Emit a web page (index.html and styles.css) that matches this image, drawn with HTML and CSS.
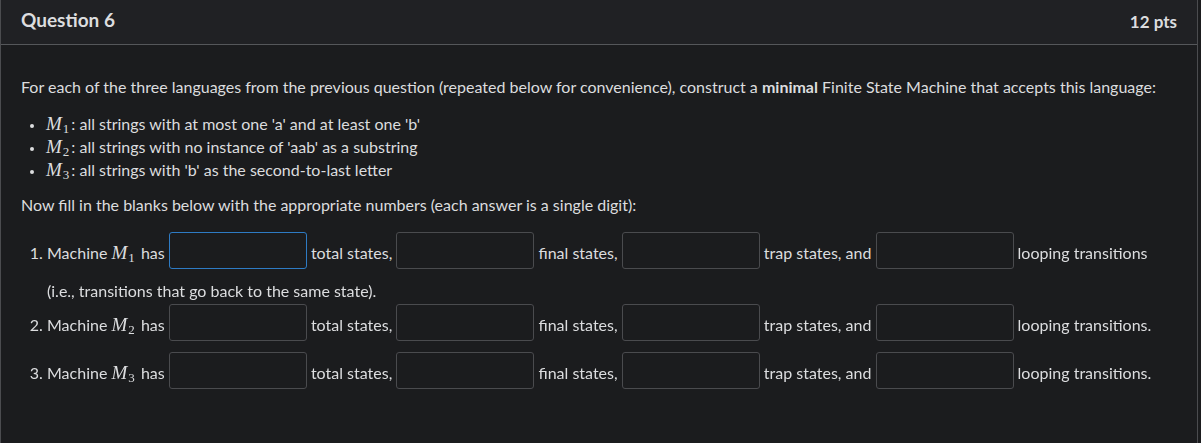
FILE: index.html
```html
<!DOCTYPE html>
<html>
<head>
<meta charset="utf-8">
<link rel="stylesheet" href="styles.css">
</head>
<body>
<div class="question">
  <div class="q-header">
    <span class="q-title">Question 6</span>
    <span class="q-pts">12 pts</span>
  </div>
  <div class="q-body">
    <p class="intro">For each of the three languages from the previous question (repeated below for convenience), construct a <strong>minimal</strong> Finite State Machine that accepts this language:</p>
    <ul class="langs">
      <li><span class="m">M<sub>1</sub></span>: all strings with at most one 'a' and at least one 'b'</li>
      <li><span class="m">M<sub>2</sub></span>: all strings with no instance of 'aab' as a substring</li>
      <li><span class="m">M<sub>3</sub></span>: all strings with 'b' as the second-to-last letter</li>
    </ul>
    <p class="now">Now fill in the blanks below with the appropriate numbers (each answer is a single digit):</p>
    <ol class="blanks">
      <li>Machine <span class="m mm">M<sub>1</sub></span> has <input class="blank focus" type="text" value="" autofocus> total states, <input class="blank" type="text"> final states, <input class="blank" type="text"> trap states, and <input class="blank" type="text"> looping transitions (i.e., transitions that go back to the same state).</li>
      <li>Machine <span class="m mm">M<sub>2</sub></span> has <input class="blank" type="text"> total states, <input class="blank" type="text"> final states, <input class="blank" type="text"> trap states, and <input class="blank" type="text"> looping transitions.</li>
      <li>Machine <span class="m mm">M<sub>3</sub></span> has <input class="blank" type="text"> total states, <input class="blank" type="text"> final states, <input class="blank" type="text"> trap states, and <input class="blank" type="text"> looping transitions.</li>
    </ol>
  </div>
</div>
</body>
</html>
```
FILE: styles.css
```css
html, body {
  margin: 0;
  padding: 0;
  background: #1b1c1e;
}
body {
  font-family: Lato, "Noto Sans", sans-serif;
  color: #dcdddf;
  font-size: 16px;
}
.question {
  width: 1196px;
  height: 443px;
  border-left: 1px solid #4b4c4f;
  border-right: 1px solid #4b4c4f;
  box-sizing: content-box;
}
.q-header {
  height: 44px;
  background: #202124;
  border-bottom: 1px solid #55575a;
  display: flex;
  align-items: center;
  justify-content: space-between;
  padding: 0 20px;
}
.q-title {
  font-weight: 700;
  font-size: 19px;
  margin-top: -5px;
}
.q-pts {
  font-weight: 700;
  font-size: 17px;
  margin-top: -1px;
}
.q-body {
  padding: 31px 20px 0 20px;
}
.intro {
  margin: 0 0 14px 0;
  line-height: 22px;
}
.intro strong { font-weight: 700; }
.langs {
  margin: 0;
  padding-left: 24px;
  line-height: 23px;
}
.langs li { padding-left: 1px; }
.langs li::marker { font-size: 12px; }
.now {
  margin: 13px 0 0 0;
  line-height: 22px;
}
.m {
  font-family: "Liberation Serif", "DejaVu Serif", serif;
  font-style: italic;
  font-size: 19px;
  margin-right: 2px;
}
.m.mm { margin-right: 2px; }
.m sub {
  font-style: normal;
  font-size: 13px;
  vertical-align: -3px;
  line-height: 0;
  margin-left: 1px;
}
.blanks {
  margin: 15px 0 0 0;
  padding-left: 26px;
  line-height: 24px;
}
.blank {
  display: inline-block;
  box-sizing: border-box;
  width: 138px;
  height: 37px;
  margin: 1px 0 10px 0;
  vertical-align: middle;
  background: #1b1c1e;
  border: 1px solid #4a4b4e;
  border-radius: 3px;
  color: #dcdddf;
  font-family: Lato, sans-serif;
  font-size: 16px;
  padding: 0 8px;
  outline: none;
}
.blank.focus {
  border-color: #2e7bc4;
}
```
